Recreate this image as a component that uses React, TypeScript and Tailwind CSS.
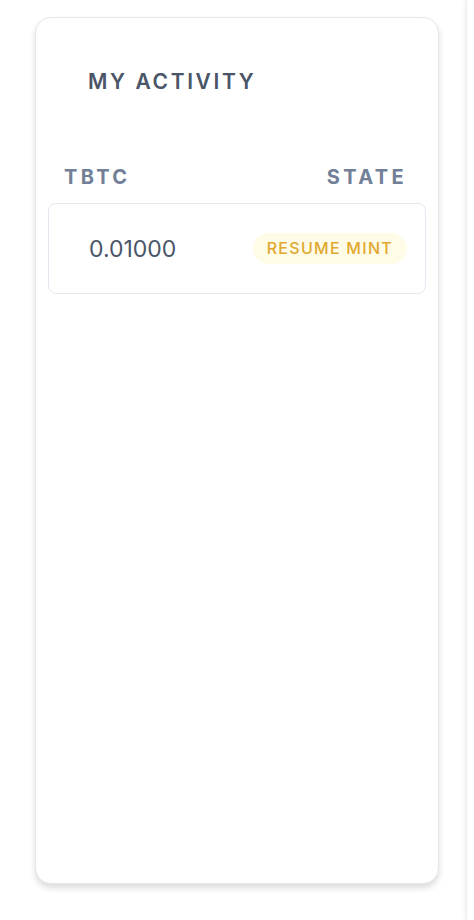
export default function App() {
  return (
    <div className="flex min-h-[920px] w-[474px] overflow-hidden bg-white" style={{ fontFamily: 'Inter, "Noto Sans", sans-serif' }}>
      <div className="ml-[35px] mt-[17px] flex h-[867px] w-[404px] shrink-0 flex-col rounded-[16px] border border-[#e5e7eb] bg-white shadow-[0_4px_6px_rgba(0,0,0,0.14)]">
        <h2 className="pl-[52px] pt-[50px] text-[21px] font-semibold leading-[28px] tracking-[0.125em] text-[#4a5568]">MY ACTIVITY</h2>
        <div className="mt-[68px] flex items-center justify-between pl-[28px] pr-[31px] text-[20px] font-bold leading-[26px] tracking-[0.17em] text-[#718096]">
          <span>TBTC</span>
          <span>STATE</span>
        </div>
        <div className="mx-[12px] mt-[13px] flex h-[91px] items-center justify-between rounded-[8px] border border-[#e2e8f0] pl-[40px] pr-[18px]">
          <span className="text-[23px] leading-[28px] text-[#4a5568]">0.01000</span>
          <span className="rounded-full bg-[#fefbe6] px-[14px] py-[5px] text-[16px] font-medium leading-[21px] tracking-[0.08em] text-[#e0a82e]">RESUME MINT</span>
        </div>
      </div>
      <div className="ml-[27px] h-[920px] w-[20px] shrink-0 border-l border-[#eceef2] shadow-[-2px_0_4px_rgba(0,0,0,0.05)]" />
    </div>
  );
}
